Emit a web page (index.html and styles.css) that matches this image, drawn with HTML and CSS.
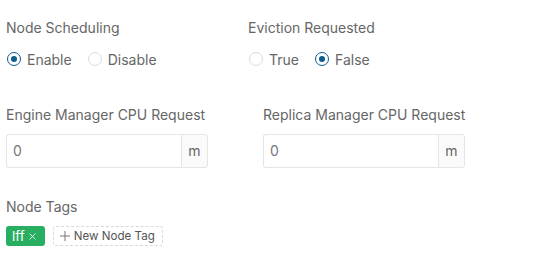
FILE: index.html
```html
<!DOCTYPE html>
<html>
<head>
<meta charset="utf-8">
<link rel="stylesheet" href="styles.css">
</head>
<body>
<div class="form">
  <div class="row row-top">
    <div class="field col-a">
      <div class="label">Node Scheduling</div>
      <div class="radios">
        <label class="radio"><span class="dot checked"></span><span>Enable</span></label>
        <label class="radio"><span class="dot"></span><span>Disable</span></label>
      </div>
    </div>
    <div class="field col-b">
      <div class="label">Eviction Requested</div>
      <div class="radios">
        <label class="radio"><span class="dot"></span><span>True</span></label>
        <label class="radio"><span class="dot checked"></span><span>False</span></label>
      </div>
    </div>
  </div>
  <div class="row row-inputs">
    <div class="field col-c">
      <div class="label">Engine Manager CPU Request</div>
      <div class="group"><div class="input">0</div><div class="addon">m</div></div>
    </div>
    <div class="field col-d">
      <div class="label">Replica Manager CPU Request</div>
      <div class="group"><div class="input">0</div><div class="addon">m</div></div>
    </div>
  </div>
  <div class="field tags-field">
    <div class="label">Node Tags</div>
    <div class="tags">
      <span class="tag">lff<svg class="x" width="7" height="7" viewBox="0 0 7 7"><path d="M0.5 0.5L6.5 6.5M6.5 0.5L0.5 6.5" stroke="rgba(255,255,255,0.8)" stroke-width="1" fill="none"/></svg></span>
      <span class="new-tag"><svg class="plus" width="10" height="10" viewBox="0 0 10 10"><path d="M5 0V10M0 5H10" stroke="#777" stroke-width="1" fill="none"/></svg>New Node Tag</span>
    </div>
  </div>
</div>
</body>
</html>
```
FILE: styles.css
```css
html, body { margin: 0; padding: 0; background: #fff; }
body {
  font-family: Inter, "Open Sans", sans-serif;
  font-size: 14px;
  color: #666;
}
.form { padding: 18px 6px 0 6px; }
.row { display: flex; }
.col-a { width: 242px; }
.col-b { width: 240px; }
.col-c { width: 257px; }
.label { line-height: 20px; color: #666; }
.radios { display: flex; margin-top: 10px; height: 22px; align-items: center; }
.radio { display: flex; align-items: center; margin-right: 15px; color: #666; }
.dot {
  box-sizing: border-box;
  width: 14px; height: 14px; border-radius: 50%;
  border: 1px solid #dcdcdc; margin: 0 6px 0 1px; position: relative;
}
.dot.checked { border-color: #0c5d8d; }
.dot.checked::after {
  content: ""; position: absolute; left: 3px; top: 3px;
  width: 6px; height: 6px; border-radius: 50%; background: #0c5d8d;
}
.row-inputs { margin-top: 35px; }
.group { display: flex; margin-top: 9px; width: 202px; height: 34px; }
.input {
  box-sizing: border-box; flex: 1; border: 1px solid #e5e5e5; border-right: 0;
  border-radius: 3px 0 0 3px; padding: 0 6px; line-height: 32px; color: #777;
}
.addon {
  box-sizing: border-box; width: 27px; border: 1px solid #e5e5e5;
  border-radius: 0 3px 3px 0; background: #fafafa; text-align: center; line-height: 32px; color: #666;
}
.tags-field { margin-top: 29px; }
.tags { display: flex; margin-top: 9px; gap: 8px; }
.tag {
  background: #27ae60; color: #fff; border-radius: 3px; height: 20px;
  padding: 0 9px 0 6px; font-size: 13.5px; box-sizing: border-box; display: inline-flex; align-items: center; gap: 4px;
}
.new-tag {
  border: 1px dashed #d9d9d9; border-radius: 3px; height: 20px;
  box-sizing: border-box; padding: 0 7px 0 6px; font-size: 11.6px; color: #555; display: inline-flex; align-items: center;
}
.plus { margin-right: 4px; }
```
